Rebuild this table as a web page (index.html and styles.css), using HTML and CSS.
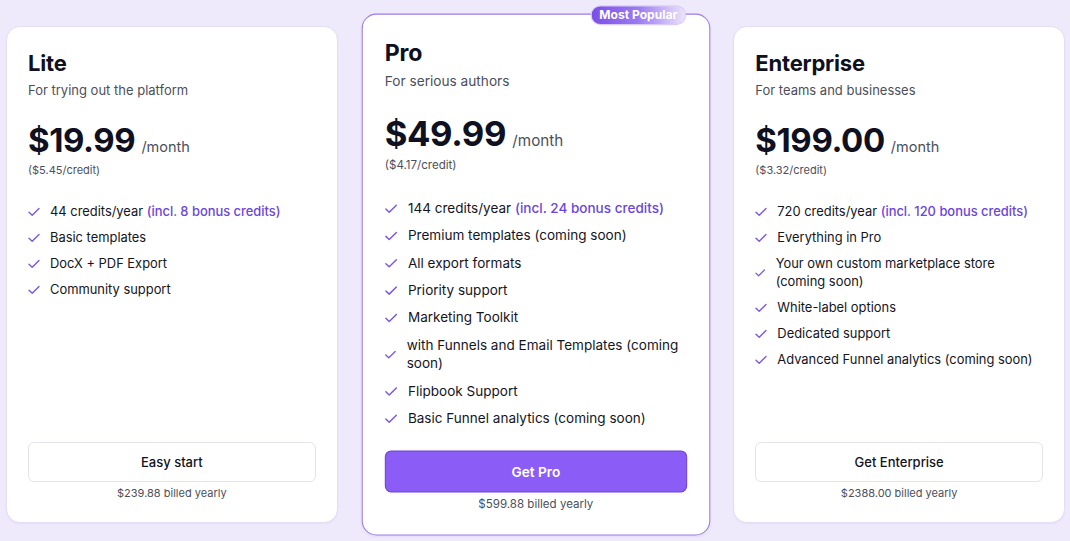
FILE: index.html
```html
<!DOCTYPE html>
<html>
<head>
<meta charset="utf-8">
<link rel="stylesheet" href="styles.css">
</head>
<body>
<main class="plans">
  <section class="card">
    <h2 class="name">Lite</h2>
    <p class="tagline">For trying out the platform</p>
    <div class="price"><span class="amount">$19.99</span><span class="per">/month</span></div>
    <p class="credit">($5.45/credit)</p>
    <ul class="features">
      <li><svg class="check" viewBox="0 0 12 10"><path d="M1 5.2 L4.2 8.2 L11 1.5"/></svg><span>44 credits/year <em>(incl. 8 bonus credits)</em></span></li>
      <li><svg class="check" viewBox="0 0 12 10"><path d="M1 5.2 L4.2 8.2 L11 1.5"/></svg><span>Basic templates</span></li>
      <li><svg class="check" viewBox="0 0 12 10"><path d="M1 5.2 L4.2 8.2 L11 1.5"/></svg><span>DocX + PDF Export</span></li>
      <li><svg class="check" viewBox="0 0 12 10"><path d="M1 5.2 L4.2 8.2 L11 1.5"/></svg><span>Community support</span></li>
    </ul>
    <div class="foot">
      <button class="btn">Easy start</button>
      <p class="billed">$239.88 billed yearly</p>
    </div>
  </section>

  <section class="card popular">
    <span class="badge">Most Popular</span>
    <h2 class="name">Pro</h2>
    <p class="tagline">For serious authors</p>
    <div class="price"><span class="amount">$49.99</span><span class="per">/month</span></div>
    <p class="credit">($4.17/credit)</p>
    <ul class="features">
      <li><svg class="check" viewBox="0 0 12 10"><path d="M1 5.2 L4.2 8.2 L11 1.5"/></svg><span>144 credits/year <em>(incl. 24 bonus credits)</em></span></li>
      <li><svg class="check" viewBox="0 0 12 10"><path d="M1 5.2 L4.2 8.2 L11 1.5"/></svg><span>Premium templates (coming soon)</span></li>
      <li><svg class="check" viewBox="0 0 12 10"><path d="M1 5.2 L4.2 8.2 L11 1.5"/></svg><span>All export formats</span></li>
      <li><svg class="check" viewBox="0 0 12 10"><path d="M1 5.2 L4.2 8.2 L11 1.5"/></svg><span>Priority support</span></li>
      <li><svg class="check" viewBox="0 0 12 10"><path d="M1 5.2 L4.2 8.2 L11 1.5"/></svg><span>Marketing Toolkit</span></li>
      <li><svg class="check" viewBox="0 0 12 10"><path d="M1 5.2 L4.2 8.2 L11 1.5"/></svg><span>with Funnels and Email Templates (coming soon)</span></li>
      <li><svg class="check" viewBox="0 0 12 10"><path d="M1 5.2 L4.2 8.2 L11 1.5"/></svg><span>Flipbook Support</span></li>
      <li><svg class="check" viewBox="0 0 12 10"><path d="M1 5.2 L4.2 8.2 L11 1.5"/></svg><span>Basic Funnel analytics (coming soon)</span></li>
    </ul>
    <div class="foot">
      <button class="btn primary">Get Pro</button>
      <p class="billed">$599.88 billed yearly</p>
    </div>
  </section>

  <section class="card">
    <h2 class="name">Enterprise</h2>
    <p class="tagline">For teams and businesses</p>
    <div class="price"><span class="amount">$199.00</span><span class="per">/month</span></div>
    <p class="credit">($3.32/credit)</p>
    <ul class="features">
      <li><svg class="check" viewBox="0 0 12 10"><path d="M1 5.2 L4.2 8.2 L11 1.5"/></svg><span>720 credits/year <em>(incl. 120 bonus credits)</em></span></li>
      <li><svg class="check" viewBox="0 0 12 10"><path d="M1 5.2 L4.2 8.2 L11 1.5"/></svg><span>Everything in Pro</span></li>
      <li><svg class="check" viewBox="0 0 12 10"><path d="M1 5.2 L4.2 8.2 L11 1.5"/></svg><span>Your own custom marketplace store (coming soon)</span></li>
      <li><svg class="check" viewBox="0 0 12 10"><path d="M1 5.2 L4.2 8.2 L11 1.5"/></svg><span>White-label options</span></li>
      <li><svg class="check" viewBox="0 0 12 10"><path d="M1 5.2 L4.2 8.2 L11 1.5"/></svg><span>Dedicated support</span></li>
      <li><svg class="check" viewBox="0 0 12 10"><path d="M1 5.2 L4.2 8.2 L11 1.5"/></svg><span>Advanced Funnel analytics (coming soon)</span></li>
    </ul>
    <div class="foot">
      <button class="btn">Get Enterprise</button>
      <p class="billed">$2388.00 billed yearly</p>
    </div>
  </section>
</main>
</body>
</html>
```

FILE: styles.css
```css
* { box-sizing: border-box; }

html, body {
  margin: 0;
  height: 100%;
}

body {
  background: #efe9fc;
  font-family: Inter, "Liberation Sans", sans-serif;
  color: #0f1020;
  overflow: hidden;
}

.plans {
  display: grid;
  grid-template-columns: repeat(3, 1fr);
  grid-auto-rows: 497px;
  column-gap: 32px;
  padding: 26px 5px 0 6px;
}

.card {
  position: relative;
  display: flex;
  flex-direction: column;
  background: #ffffff;
  border: 1px solid #e4def3;
  border-radius: 14px;
  padding: 21px 21px 21px;
  box-shadow: 0 1px 2px rgba(80, 60, 140, 0.06);
}

.card.popular {
  border-color: #9b7ce8;
  transform: scale(1.05);
}

.badge {
  position: absolute;
  top: -9px;
  right: 22px;
  height: 19px;
  padding: 0 7px;
  border-radius: 10px;
  background: linear-gradient(90deg, #7b4ee8 0%, #9c7bf0 50%, #ece4fc 100%);
  border: 1px solid #d9ccf8;
  color: #ffffff;
  font-size: 11.5px;
  font-weight: 700;
  line-height: 17px;
  white-space: nowrap;
}

.name {
  margin: 0;
  font-size: 22px;
  line-height: 30px;
  font-weight: 700;
  letter-spacing: -0.2px;
}

.tagline {
  margin: 3px 0 0;
  font-size: 13px;
  line-height: 18px;
  color: #4b4f5c;
}

.price {
  display: flex;
  align-items: baseline;
  gap: 6px;
  margin-top: 20px;
}

.amount {
  font-size: 33px;
  line-height: 42px;
  font-weight: 700;
  letter-spacing: -0.4px;
}

.per {
  font-size: 14.5px;
  color: #4b4f5c;
}

.credit {
  margin: 1px 0 0;
  font-size: 11px;
  line-height: 16px;
  color: #4b4f5c;
}

.features {
  list-style: none;
  margin: 25px 0 0;
  padding: 0;
  display: flex;
  flex-direction: column;
  gap: 8px;
}

.features li {
  display: flex;
  align-items: center;
  gap: 10px;
  font-size: 12.9px;
  line-height: 18px;
  color: #14151f;
}

.check {
  width: 12px;
  height: 10px;
  fill: none;
  stroke: #7c57e6;
  stroke-width: 1.4;
  stroke-linecap: round;
  stroke-linejoin: round;
}

.features em {
  font-style: normal;
  font-weight: 500;
  color: #6a45e0;
}

.foot {
  margin-top: auto;
  display: flex;
  flex-direction: column;
  align-items: stretch;
}

.btn {
  height: 40px;
  border: 1px solid #e5e3ec;
  border-radius: 6px;
  background: #ffffff;
  font-family: inherit;
  font-size: 13px;
  font-weight: 500;
  color: #111322;
}

.btn.primary {
  background: #8b5cf6;
  border-color: #6d3fd8;
  color: #ffffff;
  font-weight: 600;
}

.billed {
  margin: 3px 0 0;
  text-align: center;
  font-size: 11px;
  line-height: 16px;
  color: #4b4f5c;
}
```
